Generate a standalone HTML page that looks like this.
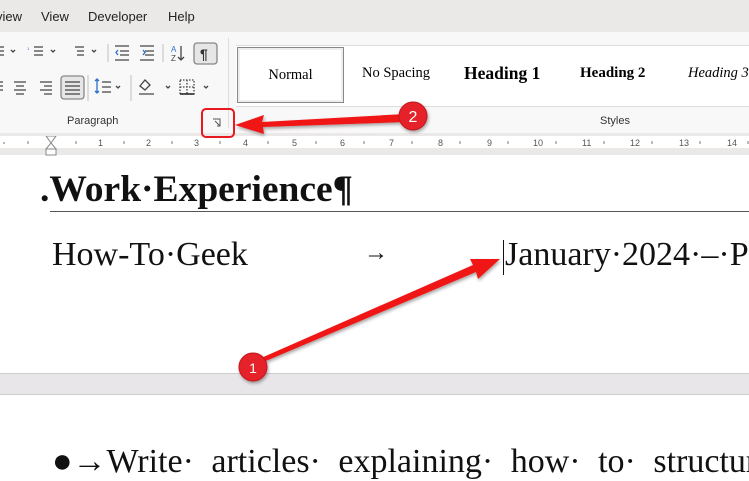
<!DOCTYPE html>
<html><head><style>
body{margin:0;width:749px;height:475px;overflow:hidden;background:#fff;font-family:"Liberation Sans",sans-serif;position:relative}
.a{position:absolute}
.menu{left:0;top:0;width:749px;height:32px;background:#ebe8e8;font-size:13px;color:#222}
.menu span{position:absolute;top:9px}
.rib{left:0;top:32px;width:749px;height:101px;background:#f9f8f8}
.ser{font-family:"Liberation Serif",serif}
</style></head><body>
<div class="a menu"><span style="left:-4px">view</span><span style="left:41px">View</span><span style="left:88px">Developer</span><span style="left:168px">Help</span></div>
<div class="a rib">
 <div class="a" style="left:228px;top:6px;width:1px;height:90px;background:#ddd"></div>
 <svg class="a" style="left:0;top:10px" width="228" height="80" viewBox="0 0 228 80" fill="none" stroke="#444" stroke-width="1.3">
  <path d="M0 5h4M0 9h4M0 13h4"/><path d="M11 8l2 2 2-2"/>
  <path d="M34 5h9M34 9h9M34 13h9"/><text x="27" y="8" font-size="4" fill="#2a6fc9" stroke="none">1</text><path d="M51 8l2 2 2-2"/>
  <path d="M75 5h9M77 9h7M77 13h7"/><path d="M92 8l2 2 2-2"/>
  <path d="M108 2v18" stroke="#ccc"/>
  <path d="M115 4h14M120 9h9M120 13h9M115 18h14"/><path d="M118 8l-2 2.5 2 2.5" stroke="#2a6fc9"/>
  <path d="M140 4h14M145 9h9M145 13h9M140 18h14"/><path d="M143 8l2 2.5-2 2.5" stroke="#2a6fc9"/>
  <path d="M163 2v18" stroke="#ccc"/>
  <text x="171" y="10" font-size="8" fill="#2a6fc9" stroke="none">A</text><text x="171" y="19" font-size="8" fill="#444" stroke="none">Z</text><path d="M181 4v14M178 15l3 3 3-3"/>
  <rect x="194" y="1" width="23" height="21" rx="3" fill="#e6e6e6" stroke="#888"/><text x="200" y="17" font-size="14" font-weight="bold" fill="#333" stroke="none">¶</text>
  <path d="M0 40h3M0 44h3M0 48h3"/>
  <path d="M14 40h12M16 44h8M14 48h12M16 52h8"/>
  <path d="M40 40h12M44 44h8M40 48h12M44 52h8"/>
  <rect x="61" y="34" width="23" height="23" rx="3" fill="#e6e6e6" stroke="#888"/><path d="M65 40h15M65 44h15M65 48h15M65 52h15"/>
  <path d="M88 33v26" stroke="#ccc"/>
  <path d="M97 37v14M95 39l2-2 2 2M95 49l2 2 2-2" stroke="#2a6fc9"/><path d="M102 40h9M102 45h9M102 50h9"/><path d="M116 44l2 2 2-2"/>
  <path d="M131 33v26" stroke="#ccc"/>
  <path d="M140 44l5-6 5 5-5 5z"/><path d="M139 52h15" stroke="#888" stroke-width="2"/><path d="M166 44l2 2 2-2"/>
  <rect x="180" y="38" width="14" height="14" stroke-dasharray="1.5 1.5"/><path d="M187 38v14M180 45h14" stroke-dasharray="1.5 1.5"/><path d="M180 52h14" stroke="#222" stroke-width="1.5"/><path d="M204 44l2 2 2-2"/>
 </svg>
 <div class="a" style="left:67px;top:83px;font-size:11px;color:#333">Paragraph</div>
 <svg class="a" style="left:212px;top:86px" width="12" height="12" fill="none" stroke="#555"><path d="M1 1h7v7M3 3l5 5M5 8h3V5"/></svg>
 <div class="a" style="left:600px;top:83px;font-size:11px;color:#333">Styles</div>
 <div class="a" style="left:236px;top:13px;width:520px;height:60px;background:#fff;border-top:1px solid #ddd;border-bottom:1px solid #ddd"></div>
 <div class="a ser" style="left:237px;top:15px;width:105px;height:54px;border:1px solid #888;box-shadow:inset 0 0 0 2px #eee;background:#fff;font-size:14.5px;text-align:center;line-height:54px">Normal</div>
 <div class="a ser" style="left:362px;top:33px;font-size:14.5px">No Spacing</div>
 <div class="a ser" style="left:464px;top:31px;font-size:17.5px;font-weight:bold">Heading 1</div>
 <div class="a ser" style="left:580px;top:33px;font-size:15px;font-weight:bold">Heading 2</div>
 <div class="a ser" style="left:688px;top:33px;font-size:14.5px;font-style:italic">Heading 3</div>
</div>
<div class="a" style="left:0;top:133px;width:749px;height:22px;background:#ebe8e8"></div>
<div class="a" style="left:0;top:136px;width:749px;height:12px;background:#fff"></div>
<svg class="a" style="left:0;top:136px" width="749" height="20" font-family="Liberation Sans" font-size="9" fill="#555">
 <g stroke="#777">
  <path d="M4 6v2M28 5v3M76 5v3M124 5v3M172 5v3M220 5v3M268 5v3M316 5v3M364 5v3M412 5v3M460 5v3M508 5v3M556 5v3M604 5v3M652 5v3M700 5v3M748 5v3"/>
 </g>
 <g><text x="98" y="10">1</text><text x="146" y="10">2</text><text x="194" y="10">3</text><text x="243" y="10">4</text><text x="292" y="10">5</text><text x="340" y="10">6</text><text x="389" y="10">7</text><text x="438" y="10">8</text><text x="487" y="10">9</text><text x="533" y="10">10</text><text x="582" y="10">11</text><text x="630" y="10">12</text><text x="679" y="10">13</text><text x="727" y="10">14</text></g>
 <path d="M46 0h10l-5 7 5 6H46l5-6z" fill="#fff" stroke="#888"/><rect x="46" y="13" width="10" height="6" fill="#fff" stroke="#888"/>
</svg>
<div class="a ser" style="left:40px;top:168px;font-size:37.5px;font-weight:bold;color:#111;white-space:nowrap">.Work·Experience¶</div>
<div class="a" style="left:50px;top:211px;width:700px;height:1px;background:#555"></div>
<div class="a ser" style="left:52px;top:236px;font-size:34px;color:#111">How-To·Geek</div>
<div class="a ser" style="left:364px;top:240px;font-size:24px;color:#111">→</div>
<div class="a" style="left:503px;top:240px;width:1px;height:35px;background:#111"></div>
<div class="a ser" style="left:505px;top:236px;font-size:34px;color:#111;white-space:nowrap">January·2024·–·Pr</div>
<div class="a" style="left:0;top:373px;width:749px;height:20px;background:#e9e6e9;border-top:1px solid #ccc;border-bottom:1px solid #ccc"></div>
<div class="a ser" style="left:52px;top:443px;font-size:34px;color:#111;white-space:nowrap;word-spacing:9px">●→Write· articles· explaining· how· to· structure</div>
<svg class="a" style="left:0;top:0" width="749" height="475">
 <defs><filter id="s"><feDropShadow dx="1" dy="2" stdDeviation="1.5" flood-opacity=".35"/></filter></defs>
 <rect x="202" y="109" width="32" height="28" rx="4" fill="none" stroke="#e8191f" stroke-width="2"/>
 <g filter="url(#s)">
  <path d="M405 114L262 122l2-7-29 10 29 9-1-7 143-5z" fill="#f01818"/>
  <circle cx="413" cy="116" r="14" fill="#e52229" stroke="#c4151b"/>
  <text x="413" y="122" font-size="16" fill="#fff" text-anchor="middle" font-family="Liberation Sans">2</text>
  <path d="M254 366L476 272l2 7 22-20-30 0 3 6L252 362z" fill="#f01818"/>
  <circle cx="253" cy="367" r="14" fill="#e52229" stroke="#c4151b"/>
  <text x="253" y="373" font-size="14" fill="#fff" text-anchor="middle" font-family="Liberation Sans">1</text>
 </g>
</svg>
</body></html>
